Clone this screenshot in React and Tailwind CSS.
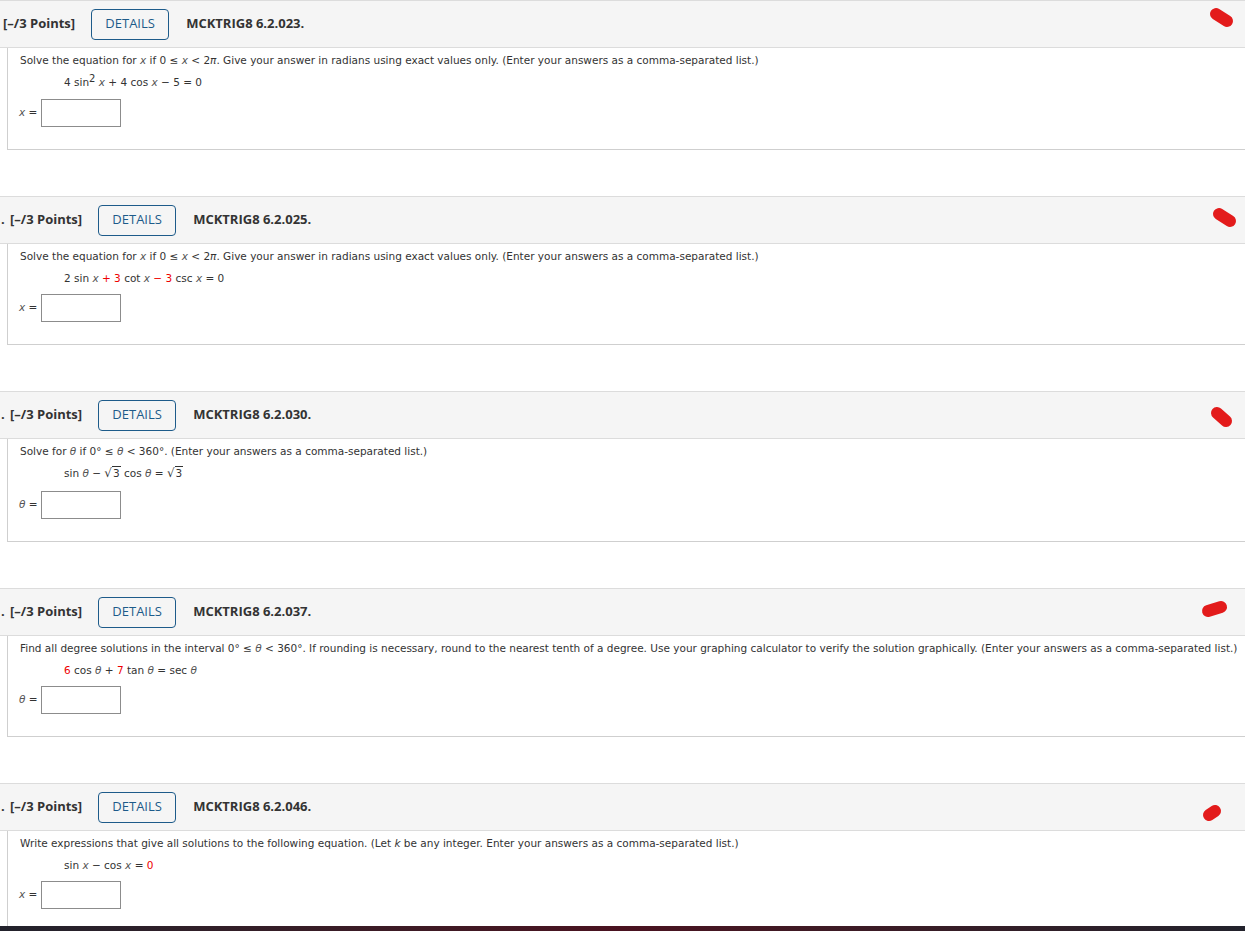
import React from "react";

const X = () => <span className="italic text-[#555]">x</span>;
const T = () => <span className="italic text-[#555]">θ</span>;
const R = ({ children }) => <span className="text-[#e00]">{children}</span>;
const Sqrt = ({ children }) => (
  <span className="inline-flex items-end">
    <span className="text-[12px] leading-none">√</span>
    <span className="border-t border-[#333] leading-[12px] px-px">{children}</span>
  </span>
);

const questions = [
  {
    num: "",
    code: "MCKTRIG8 6.2.023.",
    prompt: (
      <>
        Solve the equation for <X /> if 0 ≤ <X /> &lt; 2<i>π</i>. Give your answer in radians using exact values only. (Enter your answers as a comma-separated list.)
      </>
    ),
    eq: (
      <>
        4 sin<sup className="text-[10px] relative -top-[4px]">2</sup> <X /> + 4 cos <X /> − 5 = 0
      </>
    ),
    label: <X />,
    inputMt: "mt-[10px]",
    mark: { x1: 1216, y1: 13, x2: 1227, y2: 20 },
  },
  {
    num: ".",
    code: "MCKTRIG8 6.2.025.",
    prompt: (
      <>
        Solve the equation for <X /> if 0 ≤ <X /> &lt; 2<i>π</i>. Give your answer in radians using exact values only. (Enter your answers as a comma-separated list.)
      </>
    ),
    eq: (
      <>
        2 sin <X /> <R>+ 3</R> cot <X /> <R>− 3</R> csc <X /> = 0
      </>
    ),
    label: <X />,
    inputMt: "mt-[9px]",
    mark: { x1: 1219, y1: 17, x2: 1230, y2: 24 },
  },
  {
    num: ".",
    code: "MCKTRIG8 6.2.030.",
    prompt: (
      <>
        Solve for <T /> if 0° ≤ <T /> &lt; 360°. (Enter your answers as a comma-separated list.)
      </>
    ),
    eq: (
      <>
        sin <T /> − <Sqrt>3</Sqrt> cos <T /> = <Sqrt>3</Sqrt>
      </>
    ),
    label: <T />,
    inputMt: "mt-[11px]",
    mark: { x1: 1217, y1: 21, x2: 1226, y2: 29 },
  },
  {
    num: ".",
    code: "MCKTRIG8 6.2.037.",
    prompt: (
      <>
        Find all degree solutions in the interval 0° ≤ <T /> &lt; 360°. If rounding is necessary, round to the nearest tenth of a degree. Use your graphing calculator to verify the solution graphically. (Enter your answers as a comma-separated list.)
      </>
    ),
    eq: (
      <>
        <R>6</R> cos <T /> + <R>7</R> tan <T /> = sec <T />
      </>
    ),
    label: <T />,
    inputMt: "mt-[9px]",
    mark: { x1: 1208, y1: 22, x2: 1221, y2: 18 },
  },
  {
    num: ".",
    code: "MCKTRIG8 6.2.046.",
    prompt: (
      <>
        Write expressions that give all solutions to the following equation. (Let <i>k</i> be any integer. Enter your answers as a comma-separated list.)
      </>
    ),
    eq: (
      <>
        sin <X /> − cos <X /> = <R>0</R>
      </>
    ),
    label: <X />,
    inputMt: "mt-[9px]",
    mark: { x1: 1209, y1: 31, x2: 1215, y2: 27 },
  },
];

const Question = ({ q }) => (
  <div className="mb-[46px]">
    {/* header */}
    <div className="relative h-[48px] bg-[#f5f5f5] border-y border-[#dcdcdc] flex items-center text-[13px] text-[#333] font-['Open_Sans','Noto_Sans',sans-serif]">
      {q.num ? (
        <span className="pl-[1px] w-[10px] font-bold">{q.num}</span>
      ) : (
        <span className="w-[3px]" />
      )}
      <span className="font-bold">[–/3 Points]</span>
      <button className="ml-[16px] w-[78px] h-[31px] border border-[#1d5b8a] rounded-[4px] text-[#1d5b8a] bg-transparent">
        DETAILS
      </button>
      <span className="ml-[17px] font-bold">{q.code}</span>
      <svg className="absolute left-0 top-0 pointer-events-none" width="1245" height="48">
        <line
          x1={q.mark.x1}
          y1={q.mark.y1}
          x2={q.mark.x2}
          y2={q.mark.y2}
          stroke="#e31b1b"
          strokeWidth="12"
          strokeLinecap="round"
        />
      </svg>
    </div>

    {/* body */}
    <div className="ml-[7px] border-l border-b border-[#cfcfcf] pt-[5px] pb-[22px] pl-[10px] text-[10.5px] text-[#333] font-['DejaVu_Sans',sans-serif]">
      <div className="pl-[2px] leading-[14px] whitespace-nowrap">{q.prompt}</div>
      <div className="ml-[46px] mt-[8px] leading-[14px] whitespace-pre-wrap">{q.eq}</div>
      <div className={`${q.inputMt} flex items-center`}>
        <span className="w-[23px] pl-px">
          {q.label} =
        </span>
        <div className="w-[80px] h-[28px] border border-[#8c8c8c] bg-white" />
      </div>
    </div>
  </div>
);

export default function App() {
  return (
    <div className="w-[1245px] h-[931px] bg-white flex flex-col overflow-hidden">
      <div className="flex-1 overflow-hidden">
        {questions.map((q, i) => (
          <Question key={i} q={q} />
        ))}
      </div>
      <div className="h-[5px] bg-linear-to-r from-[#22222c] via-[#4a1220] to-[#22222c]" />
    </div>
  );
}
